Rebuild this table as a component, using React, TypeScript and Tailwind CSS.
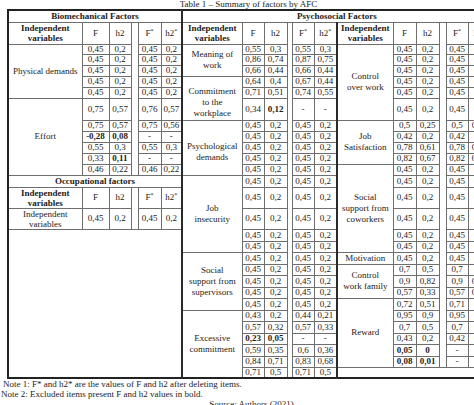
import React from "react";

const LINE = "border-[#6e6e6e]";
const td = `border ${LINE} p-0 text-center align-middle whitespace-nowrap leading-[9px]`;
const sep = `border-x border-y-0 ${LINE} p-0`;
const labBase = `border ${LINE} px-[2px] py-0 text-center align-middle whitespace-nowrap`;
const edge = "border-l-2 border-l-[#2a2a2a]";

type Group = { lines: string[]; rows: string[][]; extra?: string };

function V({ v }: { v: string }) {
  if (v.startsWith("!")) return <span className="font-bold">{v.slice(1)}</span>;
  return <>{v}</>;
}

function Lines({ lines }: { lines: string[] }) {
  return (
    <>
      {lines.map((l, i) => (
        <React.Fragment key={i}>
          {i > 0 && <br />}
          {l}
        </React.Fragment>
      ))}
    </>
  );
}

function dataCells(vals: string[], k: string): React.ReactNode[] {
  return [
    <td key={k + "a"} className={td}><V v={vals[0]} /></td>,
    <td key={k + "b"} className={td}><V v={vals[1]} /></td>,
    <td key={k + "s"} className={sep} />,
    <td key={k + "c"} className={td}><V v={vals[2]} /></td>,
    <td key={k + "d"} className={td}><V v={vals[3]} /></td>,
  ];
}

function headerCells(k: string, edgeCls: string): React.ReactNode[] {
  return [
    <td key={k + "l"} className={`${labBase} font-bold leading-[10px] ${edgeCls}`}>
      Independent<br />variables
    </td>,
    <td key={k + "f"} className={td}>F</td>,
    <td key={k + "h"} className={td}>h2</td>,
    <td key={k + "s"} className={sep} />,
    <td key={k + "F"} className={td}>F<sup className="text-[6px]">*</sup></td>,
    <td key={k + "H"} className={td}>h2<sup className="text-[6px]">*</sup></td>,
  ];
}

function blockRows(groups: Group[], edgeCls: string, k: string): React.ReactNode[][] {
  const out: React.ReactNode[][] = [];
  groups.forEach((g, gi) => {
    g.rows.forEach((r, ri) => {
      const cells: React.ReactNode[] = [];
      if (ri === 0) {
        cells.push(
          <td
            key={`${k}${gi}lab`}
            rowSpan={g.rows.length}
            className={`${labBase} leading-[11px] ${edgeCls} ${g.extra ?? ""}`}
          >
            <Lines lines={g.lines} />
          </td>
        );
      }
      cells.push(...dataCells(r, `${k}${gi}-${ri}`));
      out.push(cells);
    });
  });
  return out;
}

const s45 = ["0,45", "0,2", "0,45", "0,2"];
const rep = (n: number) => Array.from({ length: n }, () => s45);

const leftGroups: Group[] = [
  { lines: ["Physical demands"], rows: rep(5) },
  {
    lines: ["Effort"],
    rows: [
      ["0,75", "0,57", "0,76", "0,57"],
      ["0,75", "0,57", "0,75", "0,56"],
      ["!-0,28", "!0,08", "-", "-"],
      ["0,55", "0,3", "0,55", "0,3"],
      ["0,33", "!0,11", "-", "-"],
      ["0,46", "0,22", "0,46", "0,22"],
    ],
  },
];

const midGroups: Group[] = [
  {
    lines: ["Meaning of", "work"],
    rows: [
      ["0,55", "0,3", "0,55", "0,3"],
      ["0,86", "0,74", "0,87", "0,75"],
      ["0,66", "0,44", "0,66", "0,44"],
    ],
  },
  {
    lines: ["Commitment", "to the", "workplace"],
    extra: "pt-[9px]",
    rows: [
      ["0,64", "0,4", "0,67", "0,44"],
      ["0,71", "0,51", "0,74", "0,55"],
      ["0,34", "!0,12", "-", "-"],
    ],
  },
  { lines: ["Psychological", "demands"], extra: "pt-[9px]", rows: rep(5) },
  { lines: ["Job", "insecurity"], rows: rep(5) },
  { lines: ["Social", "support from", "supervisors"], rows: rep(5) },
  {
    lines: ["Excessive", "commitment"],
    rows: [
      ["0,43", "0,2", "0,44", "0,21"],
      ["0,57", "0,32", "0,57", "0,33"],
      ["!0,23", "!0,05", "-", "-"],
      ["0,59", "0,35", "0,6", "0,36"],
      ["0,84", "0,71", "0,83", "0,68"],
      ["0,71", "0,5", "0,71", "0,5"],
    ],
  },
];

const rightGroups: Group[] = [
  { lines: ["Control", "over work"], rows: rep(6) },
  {
    lines: ["Job", "Satisfaction"],
    rows: [
      ["0,5", "0,25", "0,5", "0,25"],
      ["0,42", "0,2", "0,42", "0,2"],
      ["0,78", "0,61", "0,78", "0,61"],
      ["0,82", "0,67", "0,82", "0,67"],
    ],
  },
  { lines: ["Social", "support from", "coworkers"], rows: rep(6) },
  { lines: ["Motivation"], rows: [s45] },
  {
    lines: ["Control", "work family"],
    rows: [
      ["0,7", "0,5", "0,7", "0,5"],
      ["0,9", "0,82", "0,9", "0,82"],
      ["0,57", "0,33", "0,57", "0,33"],
    ],
  },
  {
    lines: ["Reward"],
    rows: [
      ["0,72", "0,51", "0,71", "0,5"],
      ["0,95", "0,9", "0,95", "0,9"],
      ["0,7", "0,5", "0,7", "0,5"],
      ["0,43", "0,2", "0,42", "0,2"],
      ["!0,05", "!0", "-", "-"],
      ["!0,08", "!0,01", "-", "-"],
    ],
  },
];

const rowH: string[] = [
  "h-[10px]", "h-[11px]", "h-[11px]", "h-[11px]", "h-[11px]",
  "h-[22px]",
  "h-[11px]", "h-[11px]", "h-[11px]", "h-[11px]", "h-[11px]", "h-[12px]",
  "h-[21px]", "h-[21px]",
  "h-[12px]", "h-[11px]", "h-[12px]", "h-[11px]", "h-[12px]", "h-[11px]", "h-[12px]",
  "h-[11px]", "h-[12px]", "h-[11px]", "h-[12px]", "h-[11px]", "h-[11px]",
];

export default function App() {
  const left = blockRows(leftGroups, "", "L");
  left.push([
    <td key="occ" colSpan={6} className={`${td} font-bold`}>Occupational factors</td>,
  ]);
  left.push(headerCells("LH", ""));
  left.push([
    <td key="oiv" className={`${labBase} leading-[10px]`}>Independent<br />variables</td>,
    ...dataCells(s45, "LO"),
  ]);
  left.push([<td key="empty" colSpan={6} rowSpan={13} className={`border ${LINE} p-0`} />]);
  while (left.length < 27) left.push([]);

  const mid = blockRows(midGroups, edge, "M");
  const right = blockRows(rightGroups, edge, "R");
  right.push([<td key="rempty" colSpan={6} className={`border ${LINE} ${edge} p-0`} />]);

  const widths = [
    "w-[74px]", "w-[27px]", "w-[22px]", "w-[7px]", "w-[23px]", "w-[21px]",
    "w-[60px]", "w-[22px]", "w-[23px]", "w-[5px]", "w-[22px]", "w-[23px]",
    "w-[56px]", "w-[23px]", "w-[23px]", "w-[7px]", "w-[22px]", "w-[23px]",
  ];

  return (
    <div className="w-[474px] h-[405px] overflow-hidden bg-white text-[#1c1c1c] font-['Liberation_Serif',serif] text-[9px]">
      <div className="ml-[7px] w-[483px] h-[9px] leading-[9px] text-center">
        Table 1 – Summary of factors by AFC
      </div>
      <table className="ml-[7px] w-[483px] min-w-[483px] table-fixed border-collapse border-t-2 border-l-2 border-b-2 border-[#222]">
        <colgroup>
          {widths.map((w, i) => (
            <col key={i} className={w} />
          ))}
        </colgroup>
        <tbody>
          <tr className="h-[12px]">
            <td colSpan={6} className={`${td} font-bold`}>Biomechanical Factors</td>
            <td colSpan={12} className={`${td} font-bold ${edge}`}>Psychosocial Factors</td>
          </tr>
          <tr className="h-[22px]">
            {headerCells("H1", "")}
            {headerCells("H2", edge)}
            {headerCells("H3", edge)}
          </tr>
          {rowH.map((h, i) => (
            <tr key={i} className={h}>
              {left[i]}
              {mid[i]}
              {right[i]}
            </tr>
          ))}
        </tbody>
      </table>
      <div className="leading-[10px]">
        <div className="pl-[3px]">Note 1: F* and h2* are the values of F and h2 after deleting items.</div>
        <div className="pl-[1px]">Note 2: Excluded items present F and h2 values in bold.</div>
        <div className="ml-[7px] w-[483px] pl-[6px] text-center">Source: Authors (2021)</div>
      </div>
    </div>
  );
}
